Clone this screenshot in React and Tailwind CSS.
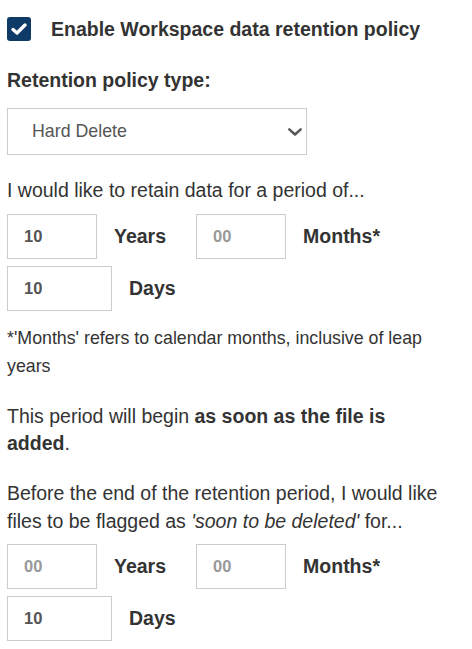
import { useState } from 'react';

function PeriodField({ value, placeholder, width, label, gapAfter }) {
  const [val, setVal] = useState(value);
  return (
    <div className="flex items-center">
      <input
        type="text"
        value={val}
        placeholder={placeholder}
        onChange={(e) => setVal(e.target.value)}
        className={`${width} h-[45px] border border-[#ccc] bg-white pl-4 text-[16.5px] font-bold text-[#555] placeholder:text-[#999] outline-none`}
      />
      <span className={`ml-[17px] font-bold ${gapAfter}`}>{label}</span>
    </div>
  );
}

function PeriodInputs({ years, months, days }) {
  return (
    <div className="flex flex-col gap-[7px]">
      <div className="flex items-center">
        <PeriodField value={years} placeholder="00" width="w-[90px]" label="Years" gapAfter="mr-[30px]" />
        <PeriodField value={months} placeholder="00" width="w-[90px]" label="Months*" gapAfter="" />
      </div>
      <div className="flex items-center">
        <PeriodField value={days} placeholder="00" width="w-[105px]" label="Days" gapAfter="" />
      </div>
    </div>
  );
}

export default function App() {
  const [enabled, setEnabled] = useState(true);
  const [policy, setPolicy] = useState('hard');

  return (
    <div className="bg-white min-h-screen pl-[7px] pr-[25px] pt-[15.5px] font-['Liberation_Sans',Arial,sans-serif] text-[19.5px] leading-[27.5px] text-[#333]">
      <label className="flex items-center gap-[20px] cursor-pointer" onClick={() => setEnabled(!enabled)}>
        <span className="w-6 h-6 rounded-[3px] bg-[#0d3a66] flex items-center justify-center shrink-0">
          {enabled && (
            <svg width="18" height="18" viewBox="0 0 18 18" fill="none">
              <path d="M3 9.5 L7 13 L15 5" stroke="white" strokeWidth="3.4" strokeLinecap="round" strokeLinejoin="round" />
            </svg>
          )}
        </span>
        <span className="font-bold">Enable Workspace data retention policy</span>
      </label>

      <div className="mt-[23.8px] font-bold">Retention policy type:</div>

      <div className="mt-[13.7px] relative w-[300px] h-[47px]">
        <select
          value={policy}
          onChange={(e) => setPolicy(e.target.value)}
          className="appearance-none w-full h-full border border-[#ccc] bg-white pl-6 text-[17.8px] text-[#555] outline-none"
        >
          <option value="hard">Hard Delete</option>
          <option value="soft">Soft Delete</option>
        </select>
        <svg className="absolute right-[5px] top-[20px] pointer-events-none" width="14" height="8" viewBox="0 0 14 8" fill="none">
          <path d="M1.3 1.3 L7 6.5 L12.7 1.3" stroke="#555" strokeWidth="2.4" strokeLinecap="round" strokeLinejoin="round" />
        </svg>
      </div>

      <p className="mt-[22.2px]">I would like to retain data for a period of...</p>

      <div className="mt-[9.3px]">
        <PeriodInputs years="10" months="" days="10" />
      </div>

      <p className="mt-[14.5px] text-[17.8px] leading-[27.4px]">
        *'Months' refers to calendar months, inclusive of leap years
      </p>

      <p className="mt-[22.5px]">
        This period will begin <b>as soon as the file is added</b>.
      </p>

      <p className="mt-[22.4px]">
        Before the end of the retention period, I would like files to be flagged as <i>'soon to be deleted'</i> for...
      </p>

      <div className="mt-[8.8px]">
        <PeriodInputs years="" months="" days="10" />
      </div>
    </div>
  );
}
